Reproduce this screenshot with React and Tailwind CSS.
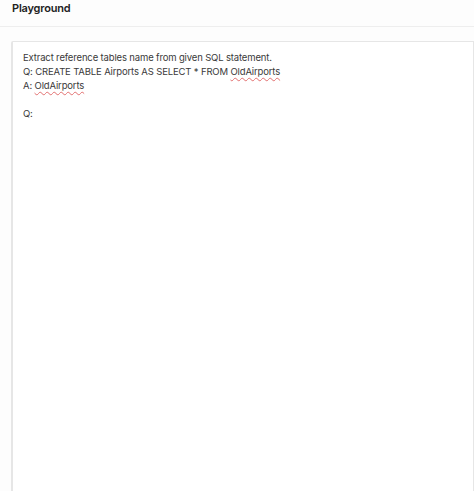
import React from 'react';

const Squiggle = ({ children }) => (
  <span className="underline decoration-wavy decoration-[#e27070] decoration-1 underline-offset-[2px]">
    {children}
  </span>
);

export default function App() {
  return (
    <div className="h-[491px] w-[474px] overflow-hidden bg-[#fdfdfd] font-['Inter',sans-serif] text-[#333]">
      <div className="h-[27px] border-b border-[#eeeeee] pl-3 pt-[1px]">
        <h1 className="text-[11px] font-semibold leading-[14px] tracking-[-0.2px] text-[#222]">Playground</h1>
      </div>
      <div className="pl-[11px] pt-[14px]">
        <div className="h-[460px] rounded-tl-[2px] border-2 border-r border-[#e6e6e6] border-t-[1.5px] bg-white px-[10px] pt-[9px] text-[9.5px] leading-[14px] tracking-[-0.15px] text-[#3a3a3a]">
          <p>Extract reference tables name from given SQL statement.</p>
          <p>
            Q: CREATE TABLE Airports AS SELECT * FROM <Squiggle>OldAirports</Squiggle>
          </p>
          <p>
            A: <Squiggle>OldAirports</Squiggle>
          </p>
          <p>&nbsp;</p>
          <p>Q:</p>
        </div>
      </div>
    </div>
  );
}
